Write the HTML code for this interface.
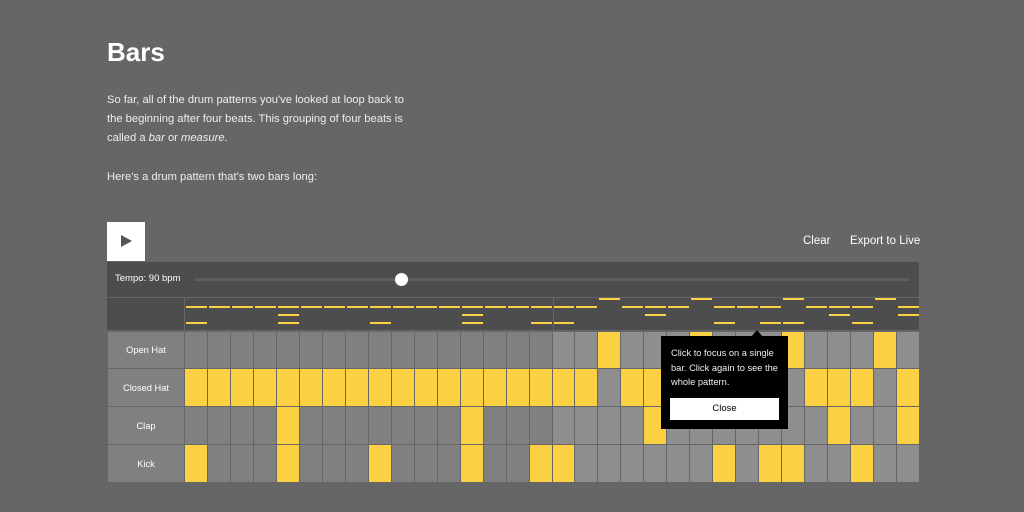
<!DOCTYPE html>
<html><head><meta charset="utf-8"><style>
*{margin:0;padding:0;box-sizing:border-box}
body{width:1024px;height:512px;background:#666;font-family:"Liberation Sans",sans-serif;color:#fff;position:relative;overflow:hidden}
.a{position:absolute}
h1{position:absolute;left:107px;top:37px;font-size:26px;font-weight:bold;letter-spacing:0}
p{position:absolute;left:107px;font-size:11.2px;color:#eee;line-height:19px}
#play{left:107px;top:222px;width:38px;height:39px;background:#fff}
.c{position:absolute;border:1px solid #666}
</style></head><body>
<h1>Bars</h1>
<p style="top:91px">So far, all of the drum patterns you've looked at loop back to<br>the beginning after four beats. This grouping of four beats is<br>called a <i>bar</i> or <i>measure</i>.</p>
<p style="top:168px">Here's a drum pattern that's two bars long:</p>
<div class="a" id="play"><div class="a" style="left:14px;top:13px;width:0;height:0;border-left:11px solid #555;border-top:6.5px solid transparent;border-bottom:6.5px solid transparent"></div></div>
<div class="a" style="left:803px;top:235px;font-size:11.5px">Clear</div>
<div class="a" style="left:850px;top:235px;font-size:11.5px">Export to Live</div>
<div class="a" style="left:107px;top:262px;width:812px;height:35px;background:#4d4d4d"></div>
<div class="a" style="left:115px;top:273px;font-size:9.5px">Tempo: 90 bpm</div>
<div class="a" style="left:195px;top:278px;width:714px;height:3px;background:#5e5e5e"></div>
<div class="a" style="left:395px;top:273px;width:13px;height:13px;border-radius:50%;background:#fff"></div>
<div class="a" style="left:107px;top:297px;width:812px;height:34px;background:#4d4d4d;border-top:1px solid #666;border-bottom:1px solid #666"></div>
<div class="a" style="left:184px;top:297px;width:1px;height:34px;background:#666"></div>
<div class="a" style="left:553px;top:297px;width:1px;height:34px;background:#666"></div>
<div id="g"></div>
<div class="a" style="left:661px;top:336px;width:127px;height:93px;background:#000"></div>
<div class="a" style="left:751px;top:330px;width:0;height:0;border-bottom:7px solid #000;border-left:6px solid transparent;border-right:6px solid transparent"></div>
<div class="a" style="left:671px;top:346px;font-size:9.3px;line-height:14.7px;color:#eee">Click to focus on a single<br>bar. Click again to see the<br>whole pattern.</div>
<div class="a" style="left:670px;top:398px;width:109px;height:22px;background:#fff;color:#000;font-size:9.5px;text-align:center;line-height:22px">Close</div>
<script>
var rows=[
{n:"Open Hat",on:[18,22,26,30]},
{n:"Closed Hat",on:[0,1,2,3,4,5,6,7,8,9,10,11,12,13,14,15,16,17,19,20,21,23,24,25,27,28,29,31]},
{n:"Clap",on:[4,12,20,28,31]},
{n:"Kick",on:[0,4,8,12,15,16,23,25,26,29]}];
var h="",ry=[298,306,314,322];
var ys=[331,368,406,444,482];
rows.forEach(function(r,i){
 var y=ys[i],hh=ys[i+1]-y;
 h+='<div class="c" style="left:107px;top:'+y+'px;width:78px;height:'+(hh+1)+'px;background:#808080;font-size:9.3px;text-align:center;line-height:'+hh+'px;color:#fff">'+r.n+'</div>';
 for(var k=0;k<32;k++){
  var x=Math.round(184+k*22.97),x2=Math.round(184+(k+1)*22.97);
  var on=r.on.indexOf(k)>=0;
  var bg=on?"#fcd043":(k<16?"#808080":"#8e8e8e");
  h+='<div class="c" style="left:'+x+'px;top:'+y+'px;width:'+(x2-x+1)+'px;height:'+(hh+1)+'px;background:'+bg+'"></div>';
  if(on) h+='<div class="a" style="left:'+(x+2)+'px;top:'+ry[i]+'px;width:'+(x2-x-2)+'px;height:1.5px;background:#fcd043"></div>';
 }
});
document.getElementById("g").innerHTML=h;
</script>
</body></html>
